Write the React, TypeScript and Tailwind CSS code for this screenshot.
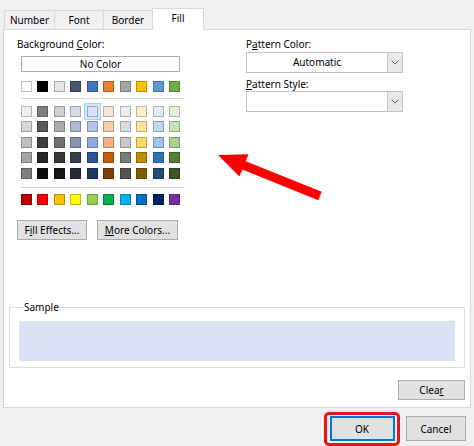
import React from "react";

const THEME_ROW = [
  "#ffffff", "#000000", "#e7e6e6", "#44546a", "#4472c4",
  "#ed7d31", "#a5a5a5", "#ffc000", "#5b9bd5", "#70ad47",
];

const TINTS = [
  ["#f2f2f2", "#7f7f7f", "#d0cece", "#d6dce4", "#d9e2f3", "#fbe5d5", "#ededed", "#fff2cc", "#deebf6", "#e2efd9"],
  ["#d8d8d8", "#595959", "#aeaaaa", "#adb9ca", "#b4c6e7", "#f7cbac", "#dbdbdb", "#fee599", "#bdd7ee", "#c5e0b3"],
  ["#bfbfbf", "#3f3f3f", "#757070", "#8496b0", "#8eaadb", "#f4b183", "#c9c9c9", "#ffd965", "#9cc3e5", "#a8d08d"],
  ["#a5a5a5", "#262626", "#3a3838", "#323f4f", "#2f5496", "#c55a11", "#7b7b7b", "#bf9000", "#2e75b5", "#538135"],
  ["#7f7f7f", "#0c0c0c", "#171616", "#222a35", "#1f3864", "#833c0b", "#525252", "#7f6000", "#1e4e79", "#375623"],
];

const STANDARD = [
  "#c00000", "#ff0000", "#ffc000", "#ffff00", "#92d050",
  "#00b050", "#00b0f0", "#0070c0", "#002060", "#7030a0",
];

const TABS = [
  { label: "Number", w: "w-[51px]" },
  { label: "Font", w: "w-[50px]" },
  { label: "Border", w: "w-[50px]" },
];

function SwatchRow({ colors, selected }: { colors: string[]; selected?: number }) {
  return (
    <div className="grid grid-cols-[repeat(10,16.45px)] h-[11px]">
      {colors.map((c, i) => (
        <div
          key={i}
          className={
            i === selected
              ? "h-[11px] w-[11px] border border-black/25 shadow-[0_0_0_2px_#cce8ff,0_0_0_3px_#99d1ff]"
              : "h-[11px] w-[11px] border border-black/25"
          }
          style={{ backgroundColor: c }}
        />
      ))}
    </div>
  );
}

function Dropdown({ value }: { value?: string }) {
  return (
    <div className="flex h-[21px] w-[157px] border border-[#c4c4c4] bg-white">
      <div className="flex flex-1 items-center justify-center leading-none">{value}</div>
      <div className="flex w-[15px] items-center justify-center border-l border-[#c4c4c4] bg-[#e8e8e8]">
        <svg width="8" height="5" viewBox="0 0 8 5">
          <polyline points="0.5,0.5 4,4 7.5,0.5" fill="none" stroke="#606060" strokeWidth="1" />
        </svg>
      </div>
    </div>
  );
}

export default function App() {
  return (
    <div
      className="relative flex h-[446px] w-[474px] flex-col overflow-hidden bg-[#f0f0f0] text-[10px] text-black"
      style={{ fontFamily: '"Segoe UI", "Noto Sans", sans-serif' }}
    >
      {/* tab strip */}
      <div className="flex h-[29px] items-end pl-[4px]">
        {TABS.map((t) => (
          <div
            key={t.label}
            className={`${t.w} -mr-px flex h-[19px] items-center justify-center border border-b-0 border-[#d9d9d9] bg-[#f0f0f0] leading-none`}
          >
            {t.label}
          </div>
        ))}
        <div className="relative z-10 -mb-px flex h-[22px] w-[52px] items-center justify-center border border-b-0 border-[#d9d9d9] bg-white pb-[2px] leading-none">
          Fill
        </div>
      </div>

      {/* panel */}
      <div className="mx-[3px] flex h-[380px] w-[468px] flex-col border border-[#d9d9d9] bg-white">
        <div className="flex">
          {/* background colour */}
          <div className="flex w-[242px] flex-col pl-[13px] pt-[7px]">
            <div className="h-[15px] leading-[15px]">
              Background <u>C</u>olor:
            </div>
            <div className="ml-[4px] mt-[4px] flex h-[16px] w-[159px] items-center justify-center border border-[#adadad] bg-white leading-none">
              No Color
            </div>
            <div className="ml-[4px] mt-[9px]">
              <SwatchRow colors={THEME_ROW} />
            </div>
            <div className="ml-[4px] mt-[6px] h-px w-[163px] bg-[#d4d4d4]" />
            <div className="ml-[4px] mt-[7px] flex flex-col gap-[4.5px]">
              {TINTS.map((row, i) => (
                <SwatchRow key={i} colors={row} selected={i === 0 ? 4 : undefined} />
              ))}
            </div>
            <div className="ml-[4px] mt-[8px] h-px w-[163px] bg-[#d4d4d4]" />
            <div className="ml-[4px] mt-[6px]">
              <SwatchRow colors={STANDARD} />
            </div>
            <div className="mt-[15px] flex gap-[10px]">
              <div className="flex h-[20px] w-[70px] items-center justify-center border border-[#adadad] bg-[#e1e1e1] leading-none">
                F<u>i</u>ll Effects...
              </div>
              <div className="flex h-[20px] w-[81px] items-center justify-center border border-[#adadad] bg-[#e1e1e1] leading-none">
                <u>M</u>ore Colors...
              </div>
            </div>
          </div>

          {/* pattern */}
          <div className="flex flex-col pt-[7px]">
            <div className="h-[15px] leading-[15px]">
              P<u>a</u>ttern Color:
            </div>
            <Dropdown value="Automatic" />
            <div className="mt-[4px] h-[14px] leading-[14px]">
              <u>P</u>attern Style:
            </div>
            <Dropdown />
          </div>
        </div>

        <div className="flex-1" />

        <fieldset className="ml-[5px] w-[456px] border border-[#dcdcdc] px-[9px] pb-[6px]">
          <legend className="ml-[5px] h-[14px] leading-[14px]">Sample</legend>
          <div className="mt-[7px] h-[40px] w-[436px] bg-[#dae3f3]" />
        </fieldset>

        <div className="mt-[12px] flex justify-end pb-[7px] pr-[5px]">
          <div className="flex h-[20px] w-[67px] items-center justify-center border border-[#adadad] bg-[#e1e1e1] leading-none">
            Clea<u>r</u>
          </div>
        </div>
      </div>

      {/* dialog buttons */}
      <div className="flex justify-end gap-[6px] pr-[8px] pt-[4px]">
        <div className="flex h-[34px] w-[76px] justify-center rounded-[5px] border-[3px] border-[#e8141c] pt-px">
          <div className="flex h-[25px] w-[65px] items-center justify-center border-2 border-[#0078d7] bg-[#e1e1e1] leading-none">
            OK
          </div>
        </div>
        <div className="mt-[4px] flex h-[25px] w-[60px] items-center justify-center border border-[#adadad] bg-[#e1e1e1] leading-none">
          Cancel
        </div>
      </div>

      {/* annotation arrow */}
      <svg className="pointer-events-none absolute left-0 top-0" width="474" height="446">
        <polygon
          points="218,155 248.5,154.3 245.7,161.2 321.7,191.8 318.3,200.2 242.3,169.6 239.5,176.5"
          fill="#ff0000"
        />
      </svg>
    </div>
  );
}
